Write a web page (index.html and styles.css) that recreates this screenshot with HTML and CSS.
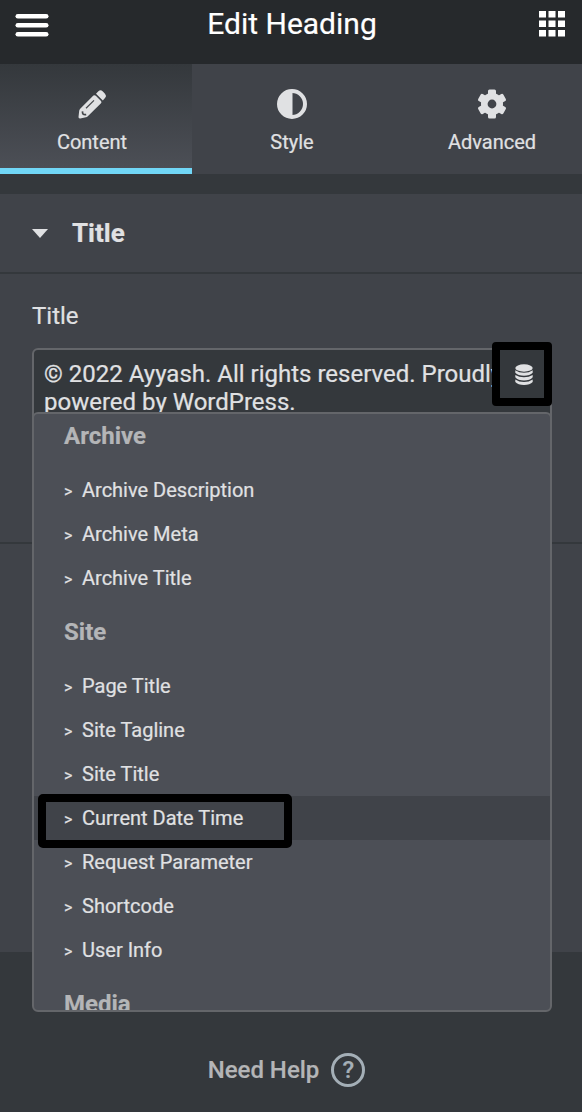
FILE: index.html
```html
<!DOCTYPE html>
<html lang="en">
<head>
<meta charset="utf-8">
<title>Edit Heading</title>
<link rel="stylesheet" href="styles.css">
</head>
<body>
<div class="panel">
  <header class="header">
    <svg class="menu-icon" width="34" height="24" viewBox="0 0 34 24"><g fill="#fff"><rect x=".5" y="0" width="33" height="4.600" rx="2.300"/><rect x=".5" y="9" width="33" height="4.600" rx="2.300"/><rect x=".5" y="18" width="33" height="4.600" rx="2.300"/></g></svg>
    <h1 class="heading">Edit Heading</h1>
    <svg class="grid-icon" width="26" height="26" viewBox="0 0 26 26"><path fill="#fff" d="M0 0h7v6.500H0zM9.500 0h7v6.500h-7zM19 0h7v6.500h-7zM0 9.500h7V16H0zM9.500 9.500h7V16h-7zM19 9.500h7V16h-7zM0 19h7v6.500H0zM9.500 19h7v6.500h-7zM19 19h7v6.500h-7z"/></svg>
  </header>
  <nav class="tabs">
    <div class="tab tab-active">
      <svg class="tab-icon" width="30" height="30" viewBox="0 0 30 30"><path fill="#e0e1e3" d="M16.400 6.600Q17.600 5.600 18.800 6.800L24 12Q25 13.200 24 14.200L10.800 27.200Q10 28 9 28.300L3.200 29.400Q1.400 29.600 1.500 28L2.200 21.800Q2.400 20.600 3.200 19.800ZM19 4.800 21.400 2.200Q23.500.2 25.600 2.200L28 4.800Q29.800 6.800 28.200 8.800L25.800 11.400Z"/><path d="m9 19.200 8-7.800" fill="none" stroke="#43464a" stroke-width="1.200"/><path d="M5.600 22.400q-.8 3.800 3.600 3.200" fill="none" stroke="#43464a" stroke-width="1.800"/></svg>
      <span>Content</span>
    </div>
    <div class="tab">
      <svg class="tab-icon" width="30" height="30" viewBox="0 0 30 30"><circle cx="15" cy="15" r="13" fill="none" stroke="#e0e1e3" stroke-width="4"/><path fill="#e0e1e3" d="M15.500 2v26H15a13 13 0 0 1 0-26z"/></svg>
      <span>Style</span>
    </div>
    <div class="tab">
      <svg class="tab-icon" width="30" height="30" viewBox="0 0 30 30"><g fill="#e0e1e3"><circle cx="15" cy="15" r="11"/><rect x="11" y=".5" width="8" height="29" rx="1.500"/><rect x="11" y=".5" width="8" height="29" rx="1.500" transform="rotate(60 15 15)"/><rect x="11" y=".5" width="8" height="29" rx="1.500" transform="rotate(120 15 15)"/></g><circle cx="15" cy="15" r="4.400" fill="#404349"/></svg>
      <span>Advanced</span>
    </div>
  </nav>
  <main class="controls">
    <div class="section-head"><i class="caret"></i><h2>Title</h2></div>
    <section class="section-body">
      <div class="label">Title</div>
      <div class="field">
        <div class="field-text">© 2022 Ayyash. All rights reserved. Proudly<br>powered by WordPress.</div>
        <div class="dynamic">
          <svg width="18" height="22" viewBox="0 0 18 22"><ellipse cx="9" cy="4" rx="8.700" ry="3.700" fill="#e0e1e3"/><path fill="#e0e1e3" d="M.3 6.200Q4 8.800 9 8.800T17.700 6.200V8.800Q15 11.800 9 11.800T.3 8.800ZM.3 10.900Q4 13.300 9 13.300T17.700 10.900V13.300Q15 16.500 9 16.500T.3 13.300ZM.3 15.500Q4 18 9 18T17.700 15.500V18Q15 21 9 21T.3 18Z"/></svg>
        </div>
        <div class="dropdown">
          <h3>Archive</h3>
          <div class="item"><i>&gt;</i>Archive Description</div>
          <div class="item"><i>&gt;</i>Archive Meta</div>
          <div class="item"><i>&gt;</i>Archive Title</div>
          <h3>Site</h3>
          <div class="item"><i>&gt;</i>Page Title</div>
          <div class="item"><i>&gt;</i>Site Tagline</div>
          <div class="item"><i>&gt;</i>Site Title</div>
          <div class="item item-hover"><i>&gt;</i>Current Date Time</div>
          <div class="item"><i>&gt;</i>Request Parameter</div>
          <div class="item"><i>&gt;</i>Shortcode</div>
          <div class="item"><i>&gt;</i>User Info</div>
          <h3>Media</h3>
        </div>
      </div>
    </section>
    <div class="section-rest"></div>
  </main>
  <footer class="help">
    <span>Need Help</span>
    <span class="help-icon">?</span>
  </footer>
</div>
</body>
</html>
```

FILE: styles.css
```css
*, *::after { box-sizing: border-box; }
body { margin: 0; background: #34383c; color: #e0e1e3; font-family: Roboto, sans-serif; -webkit-text-stroke: .2px; }
h1, h2, h3 { margin: 0; }
i { font-style: normal; }
.panel { width: 582px; height: 1112px; overflow: hidden; display: flex; flex-direction: column; }

.header { flex: none; height: 64px; padding: 11px 17px 0 15px; display: flex; align-items: flex-start; justify-content: space-between; background: #26292c; }
.menu-icon { margin-top: 3px; }
.heading { color: #fff; font-size: 30px; font-weight: 400; line-height: 36px; margin: -5px 4px 0 0; white-space: nowrap; }

.tabs { flex: none; height: 110px; display: grid; grid-template-columns: 192px 200px 190px; background: #404349; }
.tab { display: flex; flex-direction: column; align-items: center; padding-top: 25px; font-size: 20px; line-height: 24px; }
.tab:last-child { padding-left: 10px; }
.tab-active { background: linear-gradient(#34383c, #4c4f56); border-bottom: 6px solid #71d7f7; padding-right: 8px; }
.tab-icon { margin-bottom: 11px; }

.controls { flex: none; height: 758px; margin-top: 20px; display: flex; flex-direction: column; background: #404349; }
.section-head { height: 80px; padding: 0 32px; display: flex; align-items: center; gap: 24px; border-bottom: 2px solid #34383c; }
.section-head h2 { font-size: 26px; font-weight: 700; }
.caret { border: 8px solid transparent; border-top: 9px solid #e0e1e3; border-bottom: 0; }
.section-body { height: 270px; padding: 27px 30px 0 32px; border-bottom: 2px solid #34383c; }
.label { font-size: 24px; line-height: 30px; height: 47px; }
.field { position: relative; height: 150px; border: 2px solid #64666a; border-radius: 6px; background: #34383c; padding: 10px; }
.field-text { font-size: 24px; line-height: 28px; white-space: nowrap; }
.section-rest { flex: 1; }

.dynamic { position: absolute; top: -8px; right: -2px; width: 60px; height: 64px; display: flex; align-items: center; justify-content: center; padding: 2px 0 0 4px; border: 8px solid #000; border-radius: 4px; background: #34383c; }
.dropdown { position: absolute; top: 62px; left: -2px; width: 520px; height: 600px; overflow: hidden; border: 2px solid #64666a; border-radius: 6px; background: #4c4f56; }
.dropdown h3 { height: 64px; padding-left: 30px; font-size: 24px; line-height: 64px; font-weight: 700; color: #b4b5b7; }
.dropdown h3:first-child { margin-top: -10px; }
.item { height: 44px; padding-left: 30px; display: flex; align-items: center; font-size: 20px; }
.item i { width: 18px; padding-top: 2px; font-size: 16px; }
.item-hover { position: relative; background: #404349; }
.item-hover::after { content: ""; position: absolute; left: 4px; top: -2px; width: 254px; height: 54px; border: 8px solid #000; border-radius: 5px; }

.help { display: flex; justify-content: center; align-items: center; gap: 12px; padding: 101px 9px 0 0; font-size: 24px; font-weight: 500; color: #b4b5b7; }
.help-icon { width: 34px; height: 34px; display: flex; align-items: center; justify-content: center; border: 3px solid #a4afb7; border-radius: 50%; color: #a4afb7; }
```
